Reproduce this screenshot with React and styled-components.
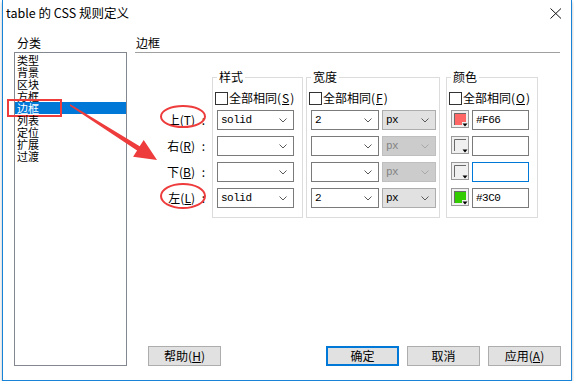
import React from 'react';
import styled, { createGlobalStyle } from 'styled-components';

const Global = createGlobalStyle`
  html, body { margin: 0; padding: 0; background: #fff; }
  body {
    font-family: "Noto Sans CJK SC", "Noto Sans", sans-serif;
    font-size: 12px;
    color: #000;
  }
  * { box-sizing: border-box; }
`;

const Window = styled.div`
  position: relative;
  width: 570px;
  height: 381px;
  margin-left: 2px;
  border: 1px solid #1883d7;
  border-top: none;
  background: #fff;
  box-shadow: 0 2px 3px rgba(0, 0, 0, 0.28);
  display: flex;
  flex-direction: column;
`;

const TitleBar = styled.div`
  height: 30px;
  padding: 0 9px 4px 3px;
  display: flex;
  align-items: center;
  justify-content: space-between;
  font-size: 12.5px;
  line-height: 14px;
`;

const Body = styled.div`
  flex: 1;
  display: flex;
  gap: 8px;
  padding: 0 10px 14px 11px;
  min-height: 0;
`;

const LeftCol = styled.div`
  width: 113px;
  display: flex;
  flex-direction: column;
`;

const SectionLabel = styled.div`
  height: 22px;
  padding: 6px 0 0 3px;
  line-height: 14px;
`;

const ListBox = styled.div`
  flex: 1;
  border: 1px solid #828790;
  padding-top: 1px;
`;

const ListItem = styled.div`
  position: relative;
  height: 12px;
  line-height: 12px;
  font-size: 11px;
  padding-left: 2px;
  background: ${(p) => (p.$selected ? '#0078d7' : 'transparent')};
  color: ${(p) => (p.$selected ? '#fff' : '#000')};
`;

const RedBox = styled.span`
  position: absolute;
  left: -8px;
  top: -3px;
  width: 55px;
  height: 18px;
  border: 2px solid #ee3b3b;
`;

const RightCol = styled.div`
  flex: 1;
  display: flex;
  flex-direction: column;
`;

const Header = styled.div`
  height: 23px;
  padding: 6px 0 0 1px;
  margin-right: 1px;
  line-height: 14px;
  border-bottom: 1px solid #a0a0a0;
`;

const BorderArea = styled.div`
  display: flex;
  align-items: flex-start;
  margin-top: 17px;
`;

const LabelCol = styled.div`
  width: 77px;
  padding-top: 40px;
  display: flex;
  flex-direction: column;
  gap: 6px;
`;

const SideLabel = styled.div`
  height: 20px;
  display: flex;
  align-items: center;
  justify-content: flex-end;
  padding-right: 5px;
  line-height: 14px;
`;

const LabelText = styled.span`
  position: relative;
  display: inline-block;
  height: 14px;
`;

const Colon = styled.span`
  width: 12px;
  text-align: right;
  padding-right: 2px;
`;

const Ellipse = styled.span`
  position: absolute;
  left: -8px;
  right: -11px;
  top: -8px;
  height: ${(p) => p.$h || 24}px;
  border: 2px solid #ee3b3b;
  border-radius: 50%;
`;

const Key = styled.span`
  text-decoration: underline;
`;

const Group = styled.fieldset`
  margin: 0 0 0 ${(p) => p.$gap || 0}px;
  width: ${(p) => p.$w}px;
  padding: 7px 3px 9px 4px;
  border: 1px solid #dcdcdc;
  min-width: 0;
  display: flex;
  flex-direction: column;
  gap: 6px;
`;

const Legend = styled.legend`
  padding: 0 2px;
  font-size: 12px;
  line-height: 14px;
`;

const CheckRow = styled.label`
  height: 14px;
  margin: 0 0 -1px -2px;
  display: flex;
  align-items: center;
  gap: 1px;
  line-height: 14px;
  white-space: nowrap;
`;

const Box = styled.span`
  width: 13px;
  height: 13px;
  border: 1px solid #333;
  background: #fff;
  flex: none;
`;

const Row = styled.div`
  height: 20px;
  display: flex;
  gap: 3px;
`;

const Select = styled.div`
  width: ${(p) => p.$w}px;
  height: 20px;
  display: flex;
  align-items: center;
  padding-left: 3px;
  border: 1px solid
    ${(p) => (p.$variant === 'unit' ? '#adadad' : p.$variant === 'off' ? '#bfbfbf' : '#7a7a7a')};
  background: ${(p) => (p.$variant === 'unit' ? '#e1e1e1' : p.$variant === 'off' ? '#cccccc' : '#fff')};
  color: ${(p) => (p.$variant === 'off' ? '#838383' : '#000')};
  font-family: "Liberation Mono", "DejaVu Sans Mono", monospace;
  font-size: 11px;
  letter-spacing: -0.5px;
`;

const Chevron = styled.svg`
  margin-left: auto;
  margin-right: 6px;
  flex: none;
`;

const TextBox = styled.div`
  width: 57px;
  height: 20px;
  display: flex;
  align-items: center;
  padding-left: 3px;
  border: 1px solid ${(p) => (p.$focus ? '#0078d7' : '#7a7a7a')};
  background: #fff;
  font-family: "Liberation Mono", "DejaVu Sans Mono", monospace;
  font-size: 11px;
  letter-spacing: -0.5px;
`;

const Swatch = styled.svg`
  flex: none;
`;

const ButtonRow = styled.div`
  margin-top: auto;
  display: flex;
  gap: 8px;
  padding-left: 13px;
`;

const Button = styled.div`
  width: 73px;
  height: 20px;
  display: flex;
  align-items: center;
  justify-content: center;
  background: #e1e1e1;
  border: ${(p) => (p.$default ? '2px solid #0078d7' : '1px solid #adadad')};
  margin-left: ${(p) => (p.$pushRight ? 'auto' : '0')};
  line-height: 14px;
`;

const ArrowSvg = styled.svg`
  position: absolute;
  left: 62px;
  top: 100px;
  pointer-events: none;
`;

function ChevronIcon({ light }) {
  return (
    <Chevron width="8" height="5" viewBox="0 0 8 5">
      <path d="M0.5 0.5L4 4L7.5 0.5" fill="none" stroke={light ? '#a8a8a8' : '#5a5a5a'} strokeWidth="1" />
    </Chevron>
  );
}

function ColorSwatch({ color }) {
  return (
    <Swatch width="18" height="18" viewBox="0 0 18 18">
      <rect x="0.5" y="0.5" width="17" height="17" fill="#f0f0f0" stroke="#9a9a9a" />
      <rect x="3" y="3" width="12" height="12" fill={color || '#f0f0f0'} />
      <path d="M3.5 15V3.5H15" fill="none" stroke="#6a6a6a" />
      <rect x="11" y="12" width="6" height="5" fill="#f0f0f0" />
      <path d="M11.5 13.5h5l-2.5 3z" fill="#000" />
    </Swatch>
  );
}

const categories = ['类型', '背景', '区块', '方框', '边框', '列表', '定位', '扩展', '过渡'];

const sides = [
  { ch: '上', key: 'T', style: 'solid', width: '2', unit: 'unit', color: '#ff6666', hex: '#F66', mark: 23 },
  { ch: '右', key: 'R', style: '', width: '', unit: 'off', color: null, hex: '' },
  { ch: '下', key: 'B', style: '', width: '', unit: 'off', color: null, hex: '', focus: true },
  { ch: '左', key: 'L', style: 'solid', width: '2', unit: 'unit', color: '#33cc00', hex: '#3C0', mark: 26 },
];

export default function App() {
  return (
    <>
      <Global />
      <Window>
        <TitleBar>
          <span>table 的 CSS 规则定义</span>
          <svg width="12" height="11" viewBox="0 0 12 11">
            <path d="M0.5 0.5L11 10.5M11 0.5L0.5 10.5" stroke="#111" strokeWidth="1" />
          </svg>
        </TitleBar>
        <Body>
          <LeftCol>
            <SectionLabel>分类</SectionLabel>
            <ListBox>
              {categories.map((c) => (
                <ListItem key={c} $selected={c === '边框'}>
                  {c}
                  {c === '边框' && <RedBox />}
                </ListItem>
              ))}
            </ListBox>
          </LeftCol>
          <RightCol>
            <Header>边框</Header>
            <BorderArea>
              <LabelCol>
                {sides.map((s) => (
                  <SideLabel key={s.key}>
                    <LabelText>
                      {s.ch}(<Key>{s.key}</Key>)
                      {s.mark && <Ellipse $h={s.mark} />}
                    </LabelText>
                    <Colon>:</Colon>
                  </SideLabel>
                ))}
              </LabelCol>
              <Group $w={91}>
                <Legend>样式</Legend>
                <CheckRow>
                  <Box />
                  全部相同(<Key>S</Key>)
                </CheckRow>
                {sides.map((s) => (
                  <Row key={s.key}>
                    <Select $w={77}>
                      {s.style}
                      <ChevronIcon />
                    </Select>
                  </Row>
                ))}
              </Group>
              <Group $w={134} $gap={3}>
                <Legend>宽度</Legend>
                <CheckRow>
                  <Box />
                  全部相同(<Key>F</Key>)
                </CheckRow>
                {sides.map((s) => (
                  <Row key={s.key}>
                    <Select $w={68}>
                      {s.width}
                      <ChevronIcon />
                    </Select>
                    <Select $w={54} $variant={s.unit}>
                      px
                      <ChevronIcon light={s.unit === 'off'} />
                    </Select>
                  </Row>
                ))}
              </Group>
              <Group $w={92} $gap={6}>
                <Legend>颜色</Legend>
                <CheckRow>
                  <Box />
                  全部相同(<Key>O</Key>)
                </CheckRow>
                {sides.map((s) => (
                  <Row key={s.key}>
                    <ColorSwatch color={s.color} />
                    <TextBox $focus={s.focus}>{s.hex}</TextBox>
                  </Row>
                ))}
              </Group>
            </BorderArea>
            <ButtonRow>
              <Button>
                帮助(<Key>H</Key>)
              </Button>
              <Button $default $pushRight>
                确定
              </Button>
              <Button>取消</Button>
              <Button>
                应用(<Key>A</Key>)
              </Button>
            </ButtonRow>
          </RightCol>
        </Body>
        <ArrowSvg width="100" height="70" viewBox="0 0 100 70">
          <polygon
            points="5.3,4.2 74.7,46.2 78.7,39.9 92,60 68.1,56.7 72.1,50.4 4.7,5.8"
            fill="#ee3b3b"
          />
        </ArrowSvg>
      </Window>
    </>
  );
}
